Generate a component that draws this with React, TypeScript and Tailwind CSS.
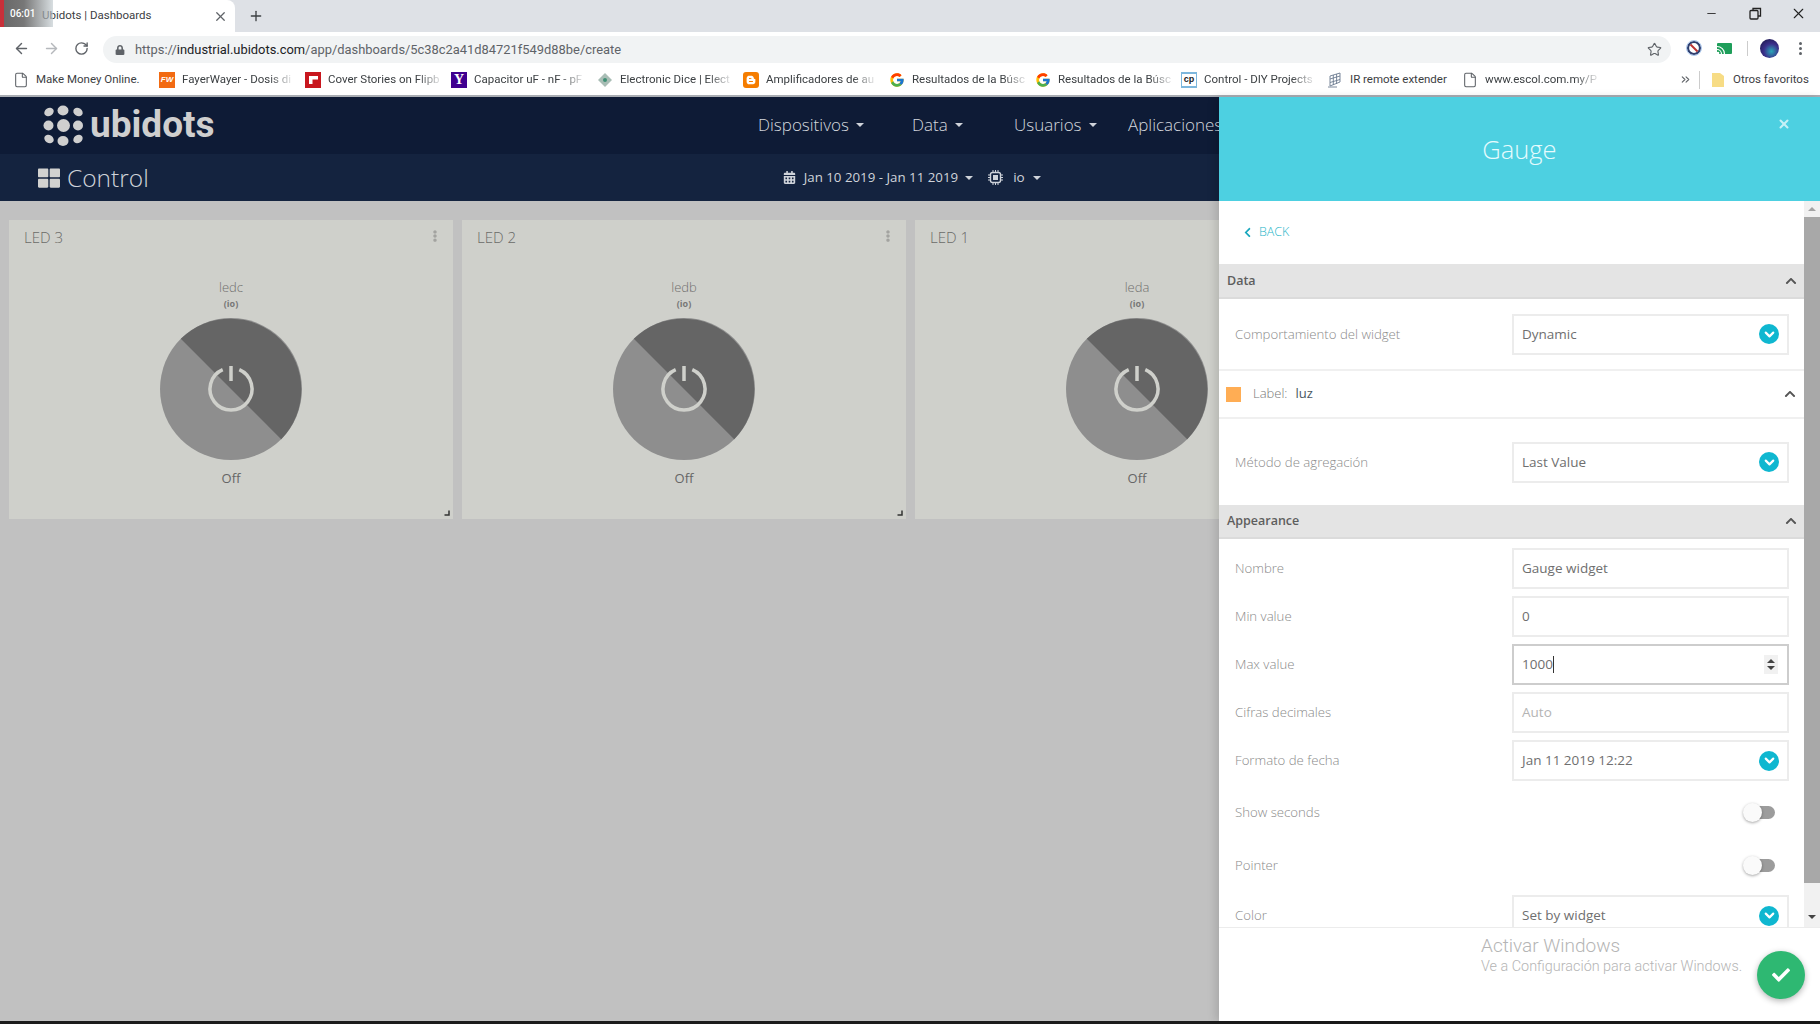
import React from "react";
import { ArrowLeft, ArrowRight, RotateCw, Star, X, Plus, Minus, ChevronDown, ChevronsRight, File } from "lucide-react";
import { FaCalendarAlt, FaThLarge, FaChevronUp, FaChevronLeft, FaCheck, FaEllipsisV, FaLock, FaBloggerB } from "react-icons/fa";
import { FcGoogle } from "react-icons/fc";

const Caret = ({ cls = "border-t-[#cfd3da]" }: { cls?: string }) => (
  <span className={`inline-block w-0 h-0 border-x-[4px] border-x-transparent border-t-[4px] ${cls}`} />
);

const DocIcon = () => <File size={16} strokeWidth={1.6} className="text-[#5f6368]" />;
const FW = () => (
  <span className="w-4 h-4 bg-[#f26a12] text-white text-[8px] font-bold italic flex items-center justify-center font-['Liberation_Sans',sans-serif]">FW</span>
);
const Flip = () => (
  <svg width="16" height="16" viewBox="0 0 16 16">
    <rect width="16" height="16" fill="#c8171e" />
    <path d="M4 4h9v3.4H7.5V12H4z" fill="#fff" />
  </svg>
);
const YIcon = () => (
  <span className="w-4 h-4 bg-[#400090] text-white text-[14px] font-bold flex items-center justify-center font-['Liberation_Serif',serif]">Y</span>
);
const Dice = () => (
  <svg width="16" height="16" viewBox="0 0 16 16">
    <path d="M8 1l7 7-7 7-7-7z" fill="#a9bdb5" />
    <circle cx="8" cy="8" r="2" fill="#3f8f74" />
  </svg>
);
const Blogger = () => (
  <span className="w-4 h-4 rounded-[3px] bg-[#f57d00] flex items-center justify-center">
    <FaBloggerB size={10} className="text-white" />
  </span>
);
const CP = () => (
  <span className="w-4 h-4 border-x border-y-2 border-[#7db7dd] text-[#222] text-[9px] font-bold leading-none flex items-center justify-center font-['Liberation_Sans',sans-serif]">cp</span>
);
const IR = () => (
  <svg width="16" height="16" viewBox="0 0 16 16" fill="none" stroke="#6b7a90" strokeWidth="0.9">
    <path d="M3 4l10-3v9L3 14z" />
    <path d="M3 7l10-3M3 10.500l10-3M6.300 3v10M9.600 2v10" />
    <path d="M1 15h9" />
  </svg>
);

const bookmarks: { icon: React.ReactNode; text: string; w: string }[] = [
  { icon: <DocIcon />, text: "Make Money Online.", w: "w-[146px]" },
  { icon: <FW />, text: "FayerWayer - Dosis di", w: "w-[146px]" },
  { icon: <Flip />, text: "Cover Stories on Flipb", w: "w-[146px]" },
  { icon: <YIcon />, text: "Capacitor uF - nF - pF", w: "w-[146px]" },
  { icon: <Dice />, text: "Electronic Dice | Elect", w: "w-[146px]" },
  { icon: <Blogger />, text: "Amplificadores de au", w: "w-[146px]" },
  { icon: <FcGoogle size={16} />, text: "Resultados de la Búsc", w: "w-[146px]" },
  { icon: <FcGoogle size={16} />, text: "Resultados de la Búsc", w: "w-[146px]" },
  { icon: <CP />, text: "Control - DIY Projects", w: "w-[146px]" },
  { icon: <IR />, text: "IR remote extender", w: "w-[135px]" },
  { icon: <DocIcon />, text: "www.escol.com.my/P", w: "w-[127px]" },
];

const Logo = () => (
  <svg width="42" height="42" viewBox="0 0 42 42" fill="#cfcfcf" className="shrink-0">
    <ellipse cx="6" cy="7" rx="5" ry="4" transform="rotate(-35 6 7)" />
    <ellipse cx="20" cy="5.500" rx="5.500" ry="5" />
    <ellipse cx="35" cy="7" rx="5" ry="4" transform="rotate(35 35 7)" />
    <circle cx="5.500" cy="20.500" r="5" />
    <circle cx="20.500" cy="20.500" r="6.500" />
    <circle cx="35" cy="20.500" r="5" />
    <ellipse cx="6" cy="34" rx="5" ry="4" transform="rotate(35 6 34)" />
    <ellipse cx="20" cy="36" rx="5.500" ry="5" />
    <ellipse cx="35" cy="34" rx="5" ry="4" transform="rotate(-35 35 34)" />
  </svg>
);

const Chip = () => (
  <svg width="17" height="17" viewBox="0 0 17 17" fill="none" stroke="#cfd3da">
    <rect x="3.500" y="3.500" width="10" height="10" rx="2" strokeWidth="1.400" />
    <rect x="6" y="6" width="5" height="5" fill="#cfd3da" stroke="none" />
    <path d="M6 1v2M8.500 1v2M11 1v2M6 14v2M8.500 14v2M11 14v2M1 6h2M1 8.500h2M1 11h2M14 6h2M14 8.500h2M14 11h2" strokeWidth="1" />
  </svg>
);

const Gauge = () => (
  <svg width="142" height="142" viewBox="-71 -71 142 142">
    <circle r="71" fill="#8e8e8e" />
    <path d="M-50.200 -50.200A71 71 0 0 1 50.200 50.200Z" fill="#656565" />
    <path d="M-8.300 -19.300A21 21 0 1 0 8.300 -19.300" fill="none" stroke="#cfd0cb" strokeWidth="3.500" />
    <path d="M0 -23V-8" stroke="#cfd0cb" strokeWidth="3.500" />
  </svg>
);

const Card = ({ title, name }: { title: string; name: string }) => (
  <div className="relative w-[444px] h-[299px] shrink-0 bg-[#cfd0cb] flex flex-col items-center">
    <div className="w-full h-[34px] px-[15px] flex items-center justify-between text-[15px] font-light text-[#6a6a68]">
      <span>{title}</span>
      <FaEllipsisV size={12} className="text-[#a3a3a0] mb-[2px] mr-[-3px]" />
    </div>
    <div className="mt-[24px] h-[18px] leading-[18px] text-[13px] text-[#6f6f6d] font-light">{name}</div>
    <div className="h-[14px] leading-[14px] mt-[1px] text-[9px] font-bold text-[#777]">(io)</div>
    <div className="mt-[7px] h-[142px]"><Gauge /></div>
    <div className="mt-[9px] h-[18px] leading-[18px] text-[13px] text-[#666]">Off</div>
    <svg width="6" height="6" viewBox="0 0 6 6" className="absolute right-[3px] bottom-[3px]">
      <path d="M5 0.500V5H0.500" fill="none" stroke="#333" strokeWidth="1.500" />
    </svg>
  </div>
);

const Row = ({ label, children, cls = "" }: { label: string; children: React.ReactNode; cls?: string }) => (
  <div className={`flex items-center justify-between pl-[16px] pr-[15px] ${cls}`}>
    <span className="text-[13.200px] font-light text-[#8a8a8a] pt-[1px]">{label}</span>
    {children}
  </div>
);

const Field = ({ children, focus = false }: { children: React.ReactNode; focus?: boolean }) => (
  <div className={`w-[277px] h-[41px] shrink-0 border-2 ${focus ? "border-[#cdcdcd]" : "border-[#ececec]"} flex items-center pl-[8px] pr-[8px] text-[13.500px] text-[#6f6f6f] bg-white`}>
    {children}
  </div>
);

const Drop = () => (
  <span className="ml-auto w-[20px] h-[20px] rounded-full bg-[#0fb7d0] flex items-center justify-center">
    <ChevronDown size={15} strokeWidth={3.500} className="text-white" />
  </span>
);

const Toggle = () => (
  <span className="relative w-[32px] h-[19px] mr-[14px] flex items-center">
    <span className="ml-[8px] w-[24px] h-[13px] rounded-full bg-[#9c9c9c]" />
    <span className="absolute left-0 top-0 w-[19px] h-[19px] rounded-full bg-[#fafafa] shadow-[0_1px_3px_rgba(0,0,0,0.35)]" />
  </span>
);

const Section = ({ title, cls }: { title: string; cls: string }) => (
  <div className={`${cls} bg-[#e4e4e4] border-b-2 border-[#dbdbdb] flex items-center justify-between pl-[8px] pr-[7px]`}>
    <span className="text-[12.500px] font-semibold text-[#5e5e5e] pt-[1px]">{title}</span>
    <FaChevronUp size={12} className="text-[#555]" />
  </div>
);

export default function App() {
  return (
    <div className="w-[1820px] h-[1024px] overflow-hidden flex flex-col bg-[#1b1b1b] font-['Open_Sans',sans-serif]">
      {/* Chrome tab strip */}
      <div className="h-[32px] bg-[#dee1e6] flex items-start font-['Roboto',sans-serif] shrink-0">
        <div className="relative w-[235px] h-[32px] bg-white rounded-tr-[8px] flex items-center pl-[42px] pr-[7px] text-[11.500px] text-[#3c4043] overflow-hidden">
          <span>Ubidots | Dashboards</span>
          <X size={15} strokeWidth={2} className="ml-auto text-[#5f6368]" />
          <div className="absolute left-0 top-0 w-[53px] h-[27px] bg-[linear-gradient(to_right,#666_0%,#777_45%,rgba(190,200,205,0.6)_100%)] flex items-center pl-[10px] text-[10px] font-medium text-white">
            <span className="absolute left-0 top-0 w-[4px] h-[27px] bg-[#c9303a]" />
            06:01
          </div>
        </div>
        <Plus size={16} strokeWidth={2} className="ml-[13px] mt-[8px] text-[#3c4043]" />
        <div className="ml-auto flex items-center h-[26px] text-[#222]">
          <Minus size={13} strokeWidth={1.600} className="mr-[31px]" />
          <svg width="13" height="13" viewBox="0 0 13 13" fill="none" stroke="#222" strokeWidth="1.300" className="mr-[28px]">
            <rect x="1" y="3.500" width="8" height="8.500" rx="1" />
            <path d="M4 3.500V1.500h7.500V9H9" />
          </svg>
          <X size={17} strokeWidth={1.600} className="mr-[13px]" />
        </div>
      </div>

      {/* Chrome toolbar */}
      <div className="h-[32px] bg-white flex items-center pl-[13px] pr-[13px] shrink-0 font-['Roboto',sans-serif]">
        <ArrowLeft size={17} strokeWidth={2} className="text-[#5f6368]" />
        <ArrowRight size={17} strokeWidth={2} className="ml-[13px] text-[#b5b8bc]" />
        <RotateCw size={15} strokeWidth={2.200} className="ml-[14px] text-[#5f6368]" />
        <div className="ml-[14px] w-[1568px] h-[27px] mt-[3px] rounded-full bg-[#f1f3f4] flex items-center pl-[12px] pr-[9px]">
          <FaLock size={10} className="text-[#5f6368]" />
          <span className="ml-[10px] text-[12.900px] text-[#5f6368] whitespace-nowrap">
            https://<span className="text-[#202124]">industrial.ubidots.com</span>/app/dashboards/5c38c2a41d84721f549d88be/create
          </span>
          <Star size={15} strokeWidth={1.800} className="ml-auto text-[#5f6368]" />
        </div>
        <svg width="16" height="16" viewBox="0 0 16 16" className="ml-[15px]">
          <circle cx="8" cy="8" r="6" fill="#fff" stroke="#2f3f6f" strokeWidth="2.200" />
          <circle cx="8" cy="8" r="7.500" fill="none" stroke="#a9c6ec" strokeWidth="1" />
          <path d="M4.500 4.500l7 7" stroke="#b33" strokeWidth="2" />
        </svg>
        <svg width="15" height="11" viewBox="0 0 15 11" className="ml-[15px]">
          <rect width="15" height="11" rx="1" fill="#1e9e5a" />
          <path d="M0 3.500a7.500 7.500 0 0 1 7.500 7.500M0 6.500a4.500 4.500 0 0 1 4.500 4.500" fill="none" stroke="#fff" strokeWidth="1.200" />
          <circle cx="1" cy="10" r="1.300" fill="#fff" />
        </svg>
        <span className="ml-[15px] w-px h-[15px] bg-[#ccc]" />
        <span className="ml-[12px] w-[19px] h-[19px] rounded-full bg-[radial-gradient(circle_at_60%_65%,#2aa7b8_0%,#3a2f8a_45%,#15123a_100%)]" />
        <span className="ml-[20px] flex flex-col gap-[2px]">
          <span className="w-[3px] h-[3px] rounded-full bg-[#5f6368]" />
          <span className="w-[3px] h-[3px] rounded-full bg-[#5f6368]" />
          <span className="w-[3px] h-[3px] rounded-full bg-[#5f6368]" />
        </span>
      </div>

      {/* Bookmarks */}
      <div className="h-[33px] bg-white border-b-2 border-[#a9adb3] flex items-center shrink-0 pl-[13px] font-['Roboto',sans-serif] text-[11.500px] text-[#3c4043]">
        {bookmarks.map((b, i) => (
          <div key={i} className={`${b.w} shrink-0 flex items-center gap-[7px]`}>
            <span className="w-4 h-4 shrink-0 flex items-center justify-center">{b.icon}</span>
            <span className={`whitespace-nowrap ${i === 0 || i === 9 ? "" : "[mask-image:linear-gradient(to_right,black_80%,rgba(0,0,0,0.15))]"}`}>{b.text}</span>
          </div>
        ))}
        <ChevronsRight size={13} strokeWidth={2} className="ml-[90px] text-[#5f6368]" />
        <span className="ml-[7px] w-px h-[18px] bg-[#ccc]" />
        <svg width="14" height="16" viewBox="0 0 14 16" className="ml-[11px]">
          <path d="M1 1h8l4 3v11H1z" fill="#f7dc85" />
        </svg>
        <span className="ml-[8px] whitespace-nowrap">Otros favoritos</span>
      </div>

      {/* App */}
      <div className="relative flex-1 flex flex-col min-h-0">
        <div className="h-[57px] shrink-0 bg-[#0e1b36] flex items-center pl-[43px] text-[17px] font-light text-[#d4d8de] whitespace-nowrap overflow-hidden">
          <div className="w-[715px] shrink-0 flex items-center">
            <Logo />
            <span className="ml-[5px] text-[37px] leading-none font-bold text-[#cfcfcf] font-['Roboto',sans-serif] mb-[3px]">ubidots</span>
          </div>
          <span className="w-[154px] shrink-0 flex items-center gap-[7px] mb-[2px]">Dispositivos <Caret /></span>
          <span className="w-[102px] shrink-0 flex items-center gap-[7px] mb-[2px]">Data <Caret /></span>
          <span className="w-[114px] shrink-0 flex items-center gap-[7px] mb-[2px]">Usuarios <Caret /></span>
          <span className="mb-[2px]">Aplicaciones</span>
        </div>
        <div className="h-[47px] shrink-0 bg-[#14233f] flex items-center pl-[38px] text-[#cfd3da]">
          <FaThLarge size={22} className="text-[#d2d2d0]" />
          <span className="ml-[7px] text-[24.500px] font-light leading-none pt-[1px]">Control</span>
          <FaCalendarAlt size={13} className="ml-[634px]" />
          <span className="ml-[8px] text-[13.300px] whitespace-nowrap">Jan 10 2019 - Jan 11 2019</span>
          <span className="ml-[7px] flex"><Caret /></span>
          <span className="ml-[14px] flex"><Chip /></span>
          <span className="ml-[9px] text-[13.500px]">io</span>
          <span className="ml-[8px] flex"><Caret /></span>
        </div>
        <div className="flex-1 bg-[#c1c1c1] flex gap-[9px] pl-[9px] pt-[19px] overflow-hidden min-h-0 mb-[3px]">
          <Card title="LED 3" name="ledc" />
          <Card title="LED 2" name="ledb" />
          <Card title="LED 1" name="leda" />
        </div>

        {/* Drawer */}
        <div className="absolute right-0 top-0 bottom-[3px] w-[601px] bg-white flex flex-col shadow-[-4px_0_8px_rgba(0,0,0,0.12)]">
          <div className="h-[104px] shrink-0 bg-[#4dd0e1] relative flex items-center justify-center text-[25.500px] font-light text-[#e6fbfd]">
            Gauge
            <X size={14} strokeWidth={3.500} className="absolute right-[29px] top-[20px] text-[#c7f1f6]" />
          </div>
          <div className="flex-1 flex min-h-0">
            <div className="flex-1 min-w-0 overflow-hidden">
              <div className="h-[63px] flex items-center pl-[23px] gap-[5px] text-[12.500px] text-[#29b6c9]">
                <FaChevronLeft size={11} className="text-[#17a7bd]" />
                <span className="font-light ml-[1px]">BACK</span>
              </div>
              <Section title="Data" cls="h-[35px]" />
              <Row label="Comportamiento del widget" cls="h-[72px] border-b-2 border-[#f0f0f0]">
                <Field>Dynamic<Drop /></Field>
              </Row>
              <div className="h-[48px] flex items-center pl-[7px] pr-[8px] border-b-2 border-[#f0f0f0] text-[13px]">
                <span className="w-[15px] h-[15px] bg-[#ffad54]" />
                <span className="ml-[12px] font-light text-[#777]">Label:</span>
                <span className="ml-[8px] font-medium text-[#4a5660]">luz</span>
                <FaChevronUp size={12} className="ml-auto text-[#555]" />
              </div>
              <Row label="Método de agregación" cls="h-[86px]">
                <Field>Last Value<Drop /></Field>
              </Row>
              <Section title="Appearance" cls="h-[34px]" />
              <div className="pt-[9px] flex flex-col gap-[7px]">
                <Row label="Nombre"><Field>Gauge widget</Field></Row>
                <Row label="Min value"><Field>0</Field></Row>
                <Row label="Max value">
                  <Field focus>
                    1000<span className="w-px h-[17px] bg-[#333]" />
                    <span className="ml-auto mr-[1px] w-[14px] h-[19px] bg-[#f1f1f1] flex flex-col items-center justify-center gap-[3px]">
                      <span className="w-0 h-0 border-x-[4px] border-x-transparent border-b-[4px] border-b-[#444]" />
                      <span className="w-0 h-0 border-x-[4px] border-x-transparent border-t-[4px] border-t-[#444]" />
                    </span>
                  </Field>
                </Row>
                <Row label="Cifras decimales"><Field><span className="text-[#b4b4b4]">Auto</span></Field></Row>
                <Row label="Formato de fecha"><Field>Jan 11 2019 12:22<Drop /></Field></Row>
              </div>
              <Row label="Show seconds" cls="h-[48px] mt-[7px]"><Toggle /></Row>
              <Row label="Pointer" cls="h-[59px]"><Toggle /></Row>
              <Row label="Color"><Field>Set by widget<Drop /></Field></Row>
            </div>
            <div className="w-[16px] shrink-0 bg-[#f1f1f1] flex flex-col items-center">
              <div className="h-[16px] flex items-center"><span className="w-0 h-0 border-x-[4px] border-x-transparent border-b-[4px] border-b-[#a3a3a3]" /></div>
              <div className="w-full h-[666px] bg-[#a8a8a8]" />
              <div className="mt-auto h-[20px] flex items-center"><span className="w-0 h-0 border-x-[4px] border-x-transparent border-t-[4px] border-t-[#444]" /></div>
            </div>
          </div>
          <div className="h-[94px] shrink-0 border-t border-[#ececec] flex justify-end items-start pr-[15px] gap-[16px] font-['Roboto',sans-serif] bg-white">
            <div className="mt-[6px] w-[260px] text-[#b5b5b5] font-light">
              <div className="text-[19px] leading-[24px]">Activar Windows</div>
              <div className="text-[14.400px] leading-[18px] whitespace-nowrap">Ve a Configuración para activar Windows.</div>
            </div>
            <div className="mt-[23px] w-[48px] h-[48px] rounded-full bg-[#2eb872] flex items-center justify-center shadow-[0_2px_6px_rgba(0,0,0,0.3)]">
              <FaCheck size={18} className="text-white" />
            </div>
          </div>
        </div>
      </div>
    </div>
  );
}
